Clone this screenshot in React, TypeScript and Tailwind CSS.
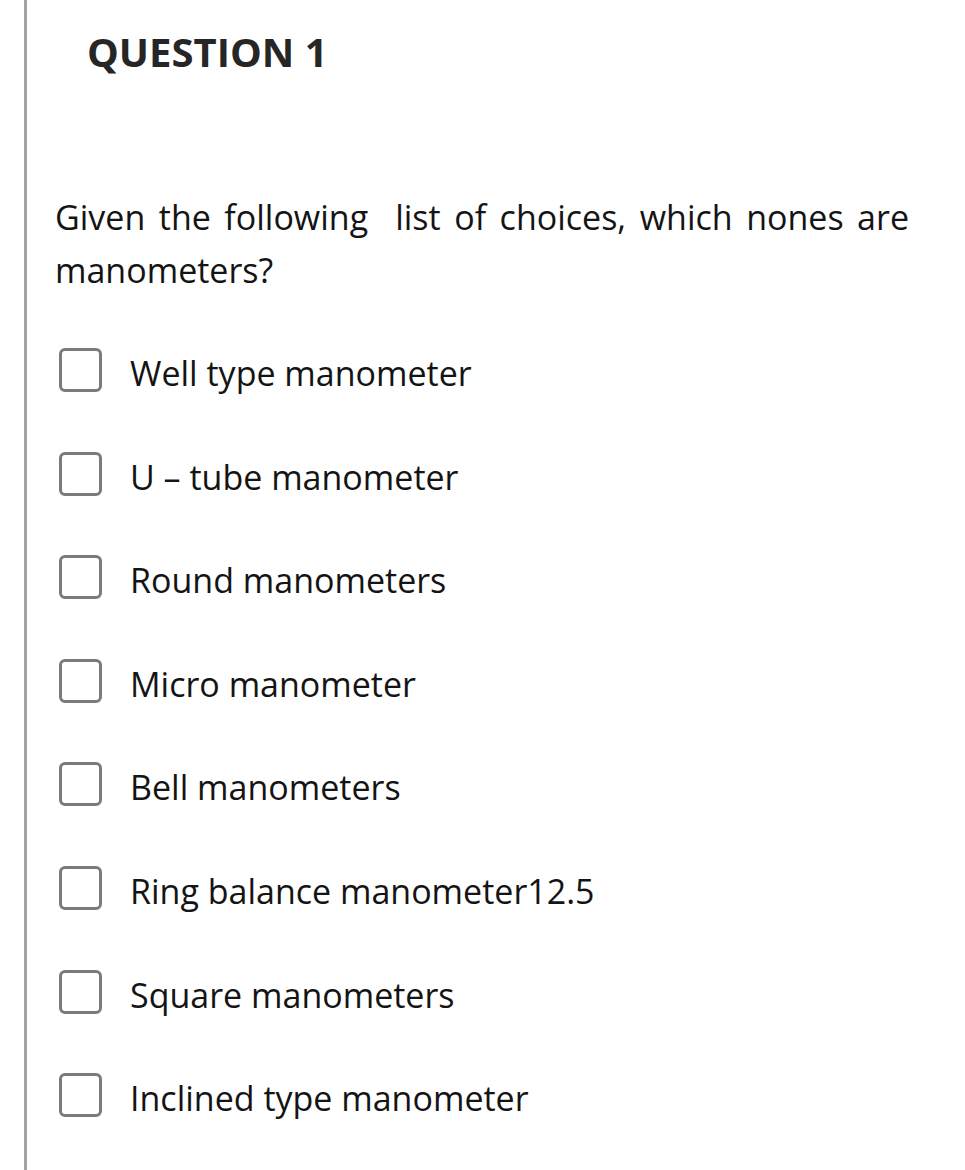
const choices = [
  'Well type manometer',
  'U – tube manometer',
  'Round manometers',
  'Micro manometer',
  'Bell manometers',
  'Ring balance manometer12.5',
  'Square manometers',
  'Inclined type manometer',
];

function Checkbox() {
  return <span className="block h-[44px] w-[43px] shrink-0 rounded-[6px] border-[3px] border-[#7b7b7b] bg-white" />;
}

export default function App() {
  return (
    <main className="min-h-[1170px] bg-white font-['Open_Sans',sans-serif] text-[#141414]">
      <div className="ml-[24px] min-h-[1170px] border-l-[3px] border-[#a3a3a3]">
        <h1 className="pl-[60px] pt-[26px] text-[40px] font-bold leading-[52px] text-[#262626]">QUESTION 1</h1>
        <p className="mt-[113px] pl-[28px] pr-[56px] text-justify text-[34px] leading-[53px]">
          Given the following&nbsp; list of choices, which nones are manometers?
        </p>
        <ul className="mt-[51px] flex flex-col gap-[56.6px] pl-[32px]">
          {choices.map((choice) => (
            <li key={choice} className="flex items-start gap-[28px]">
              <Checkbox />
              <span className="pt-[3px] text-[34px] leading-[44px]">{choice}</span>
            </li>
          ))}
        </ul>
      </div>
    </main>
  );
}
